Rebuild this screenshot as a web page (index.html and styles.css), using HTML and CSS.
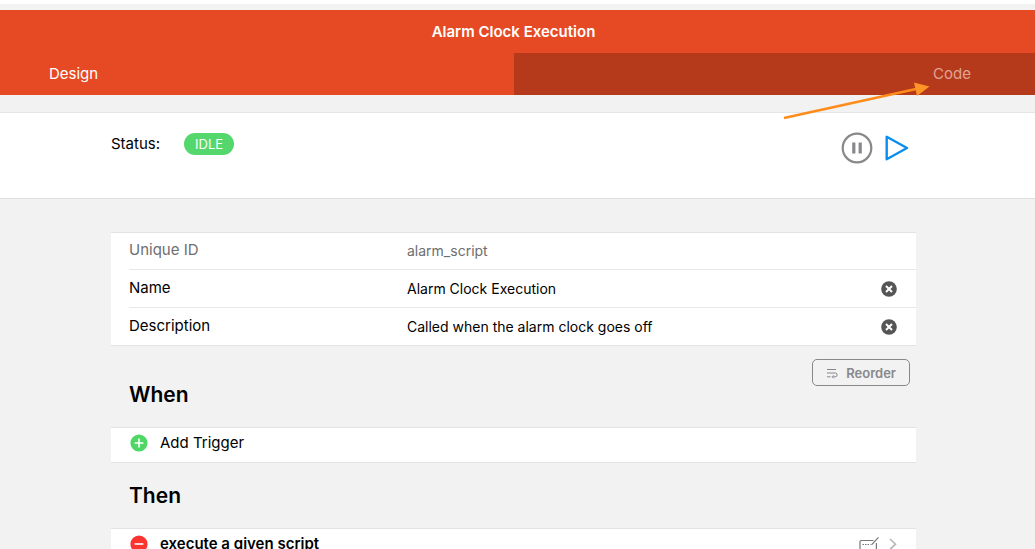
FILE: index.html
```html
<!DOCTYPE html>
<html lang="en">
<head>
<meta charset="utf-8">
<meta name="viewport" content="width=device-width, initial-scale=1">
<title>Alarm Clock Execution</title>
<link rel="stylesheet" href="styles.css">
</head>
<body>
<div class="strip"></div>
<header class="header">
  <h1 class="title">Alarm Clock Execution</h1>
  <nav class="tabs">
    <button class="tab tab-active" type="button">Design</button>
    <button class="tab tab-code" type="button">Code</button>
  </nav>
  <svg class="arrow" viewBox="0 0 150 40" aria-hidden="true">
    <path d="M2 36 L134 7" stroke="#ff8c1a" stroke-width="2.4" fill="none"/>
    <path d="M132 0.500 L147.500 4.500 L135 14 Z" fill="#ff9427"/>
  </svg>
</header>
<section class="status">
  <div class="status-info">
    <span class="status-label">Status:</span>
    <span class="badge">IDLE</span>
  </div>
  <div class="controls">
    <button class="icon-button" type="button" aria-label="Pause">
      <svg width="32" height="32" viewBox="0 0 32 32"><circle cx="16" cy="16" r="14.300" fill="none" stroke="#88888b" stroke-width="2.200"/><path d="M11.200 10.500h3.200v11h-3.200zM17.600 10.500h3.200v11h-3.200z" fill="#88888b"/></svg>
    </button>
    <button class="icon-button" type="button" aria-label="Run">
      <svg width="26" height="32" viewBox="0 0 26 32"><path d="M2.700 4.800 V27.200 L23 16 Z" fill="none" stroke="#0b8df0" stroke-width="2.400" stroke-linejoin="round"/></svg>
    </button>
  </div>
</section>
<main class="content">
  <form class="card">
    <div class="field field-muted">
      <label class="field-label" for="uid">Unique ID</label>
      <input class="field-input" id="uid" type="text" value="alarm_script" readonly>
    </div>
    <div class="field">
      <label class="field-label" for="name">Name</label>
      <input class="field-input" id="name" type="text" value="Alarm Clock Execution">
      <button class="icon-button" type="button" aria-label="Clear name">
        <svg width="16" height="16" viewBox="0 0 16 16"><circle cx="8" cy="8" r="7.800" fill="#555"/><path d="M5 5l6 6M11 5l-6 6" stroke="#fff" stroke-width="2"/></svg>
      </button>
    </div>
    <div class="field">
      <label class="field-label" for="description">Description</label>
      <input class="field-input" id="description" type="text" value="Called when the alarm clock goes off">
      <button class="icon-button" type="button" aria-label="Clear description">
        <svg width="16" height="16" viewBox="0 0 16 16"><circle cx="8" cy="8" r="7.800" fill="#555"/><path d="M5 5l6 6M11 5l-6 6" stroke="#fff" stroke-width="2"/></svg>
      </button>
    </div>
  </form>
  <div class="section-head section-head-first">
    <h2 class="heading">When</h2>
    <button class="reorder" type="button">
      <svg width="12" height="12" viewBox="0 0 12 12" fill="none" stroke="#88888b"><path d="M1 2.500h9M1 6h8.200a1.900 1.900 0 0 1 0 3.800H7M1 9.800h3.500"/><path d="M7.600 8.300L6.100 9.800l1.500 1.500"/></svg>
      Reorder
    </button>
  </div>
  <div class="card">
    <button class="row" type="button">
      <svg width="18" height="18" viewBox="0 0 18 18"><circle cx="9" cy="9" r="8.600" fill="#4fd765"/><path d="M9 4.600v8.800M4.600 9h8.800" stroke="#fff" stroke-width="1.600"/></svg>
      <span class="row-text">Add Trigger</span>
    </button>
  </div>
  <div class="section-head">
    <h2 class="heading">Then</h2>
  </div>
  <div class="card">
    <button class="row row-strong" type="button">
      <svg width="18" height="18" viewBox="0 0 18 18"><circle cx="9" cy="9" r="8.600" fill="#fb3430"/><path d="M4.600 9h8.800" stroke="#fff" stroke-width="1.600"/></svg>
      <span class="row-text">execute a given script</span>
      <svg width="20" height="18" viewBox="0 0 20 18" fill="none" stroke="#77777a" stroke-width="1.200"><path d="M14.500 5.500H2.200a1.200 1.200 0 0 0-1.200 1.200v7.600a1.200 1.200 0 0 0 1.200 1.200h14a1.200 1.200 0 0 0 1.200-1.200V8"/><path d="M3.500 9.500h8" stroke-dasharray="1.500 1"/><path d="M12.500 9.800L19.500 2.300"/></svg>
      <svg width="8" height="18" viewBox="0 0 8 18" fill="none" stroke="#b5b5b8" stroke-width="1.600"><path d="M1 4l5.500 5.200L1 14.400"/></svg>
    </button>
  </div>
</main>
</body>
</html>
```
FILE: styles.css
```css
* {
  box-sizing: border-box;
}

body {
  margin: 0;
  height: 100vh;
  overflow: hidden;
  background: #f2f2f2;
  color: #000;
  font: 15px/20px Inter, "Liberation Sans", sans-serif;
}

button,
input {
  margin: 0;
  padding: 0;
  border: 0;
  background: none;
  color: inherit;
  font: inherit;
}

svg {
  display: block;
  flex: none;
}

.strip {
  height: 10px;
  border-top: 4px solid #fff;
}

.header {
  position: relative;
  background: #e64a24;
  color: #fff;
}

.title {
  margin: 0;
  padding: 12px 8px 11px 0;
  font-size: 15px;
  font-weight: 600;
  line-height: 20px;
  text-align: center;
}

.tabs {
  display: grid;
  grid-template-columns: 514fr 521fr;
}

.tab {
  height: 42px;
  padding: 0 49px;
  text-align: left;
}

.tab-code {
  padding: 0 64px;
  background: #b5391b;
  color: #e0a495;
  text-align: right;
}

.arrow {
  position: absolute;
  top: 72px;
  right: 103px;
  width: 150px;
  height: 40px;
}

.status {
  display: flex;
  justify-content: space-between;
  align-items: flex-start;
  margin-top: 17px;
  padding: 19px 125px 34px 111px;
  border-top: 1px solid #e5e5e5;
  border-bottom: 1px solid #e0e0e0;
  background: #fff;
}

.status-info,
.controls {
  display: flex;
  align-items: center;
}

.status-info {
  gap: 24px;
  padding-top: 1px;
}

.controls {
  gap: 11px;
}

.badge {
  padding: 1px 11px;
  border-radius: 11px;
  background: #54d76c;
  color: #fff;
  font-size: 13px;
}

.content {
  padding: 33px 119px 0 111px;
}

.card {
  border-top: 1px solid #e3e3e3;
  border-bottom: 1px solid #e3e3e3;
  background: #fff;
}

.field {
  display: flex;
  align-items: center;
  height: 38px;
  margin-left: 18px;
  padding-right: 19px;
  border-bottom: 1px solid #e8e8e8;
}

.field:last-child {
  height: 37px;
  border-bottom: 0;
}

.field-muted {
  height: 37px;
  color: #6e6e6e;
}

.field-label {
  width: 278px;
  padding-bottom: 2px;
}

.field-input {
  flex: 1;
  min-width: 0;
  font-size: 14px;
}

.section-head {
  display: flex;
  justify-content: space-between;
  align-items: flex-end;
  height: 65px;
  padding: 0 6px 18px 18px;
}

.section-head-first {
  align-items: flex-start;
  height: 81px;
  padding-top: 13px;
}

.heading {
  margin: 0;
  font-size: 21px;
  font-weight: 600;
  line-height: 28px;
}

.section-head-first .heading {
  align-self: flex-end;
}

.reorder {
  display: flex;
  align-items: center;
  gap: 8px;
  height: 27px;
  padding: 0 13px;
  border: 1px solid #88888b;
  border-radius: 5px;
  color: #88888b;
  font-size: 13px;
  font-weight: 600;
}

.row {
  display: flex;
  align-items: center;
  gap: 12px;
  width: 100%;
  height: 34px;
  padding: 0 19px 4px 19px;
  text-align: left;
}

.row-text {
  flex: 1;
}

.row-strong {
  gap: 10px;
  font-weight: 600;
}

.row-strong .row-text {
  padding-left: 2px;
}
```
